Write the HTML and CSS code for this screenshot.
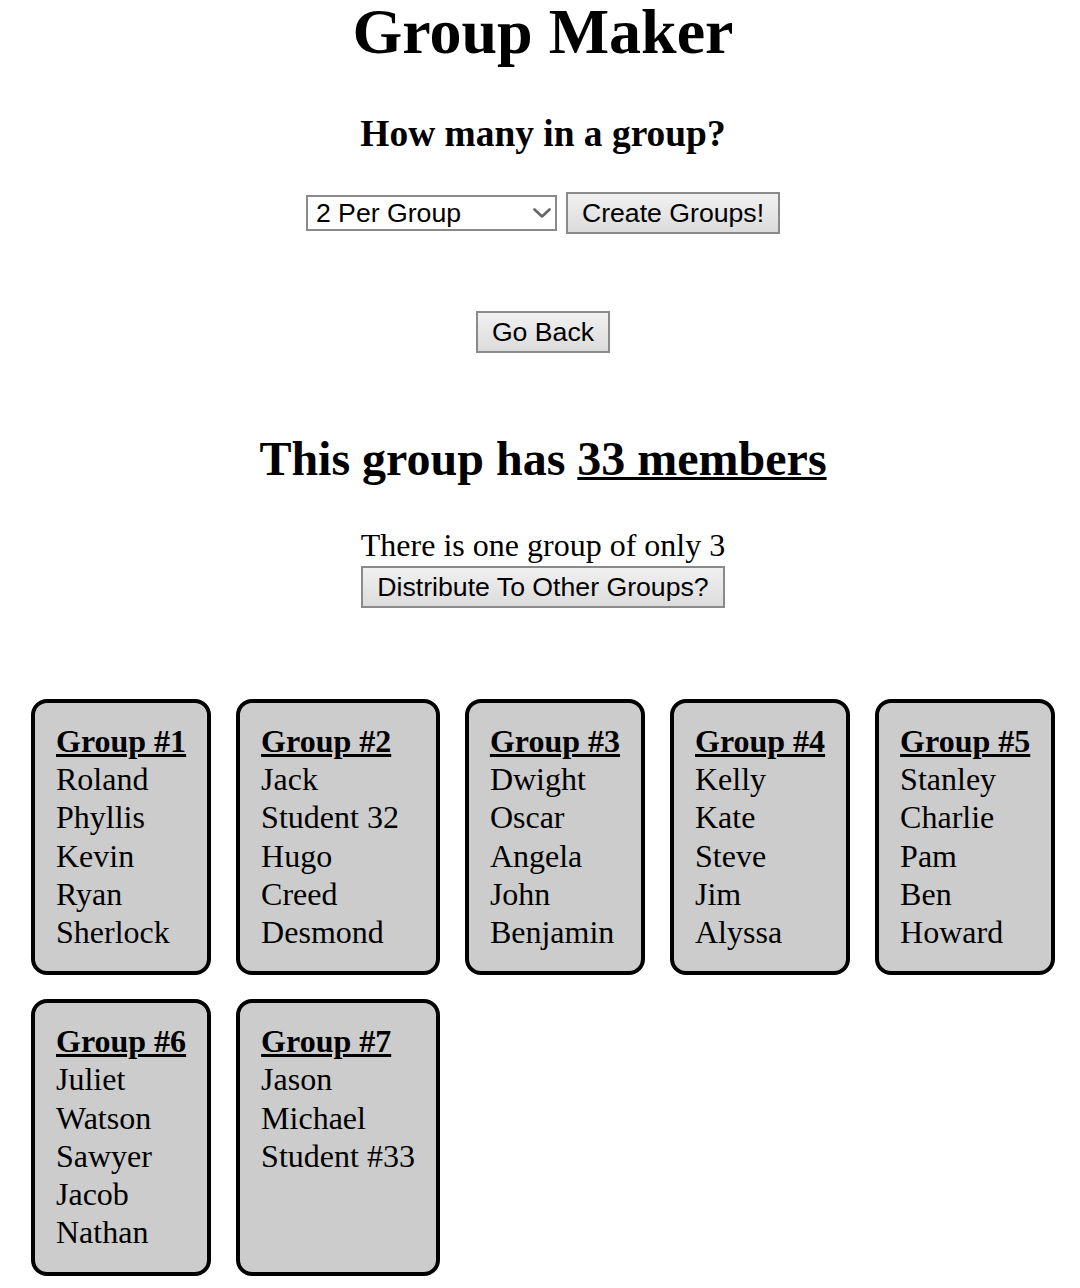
FILE: index.html
```html
<!DOCTYPE html>
<html lang="en">
<head>
<meta charset="utf-8">
<title>Group Maker</title>
<link rel="stylesheet" href="styles.css">
</head>
<body>
<main class="page">
  <h1 class="title">Group Maker</h1>
  <h3 class="question">How many in a group?</h3>
  <div class="controls">
    <div class="select-wrap">
      <select class="size-select">
        <option>2 Per Group</option>
        <option>3 Per Group</option>
        <option>4 Per Group</option>
      </select>
      <svg class="chevron" width="18" height="10" viewBox="0 0 18 10" aria-hidden="true"><polyline points="1.5,1.5 9,8.5 16.5,1.5" fill="none" stroke="#666" stroke-width="2.6" stroke-linecap="round" stroke-linejoin="round"/></svg>
    </div>
    <button class="btn">Create Groups!</button>
  </div>
  <div class="back-row"><button class="btn">Go Back</button></div>
  <h2 class="count">This group has <u>33 members</u></h2>
  <p class="leftover">There is one group of only 3</p>
  <div class="dist-row"><button class="btn">Distribute To Other Groups?</button></div>
</main>
<section class="groups">
  <div class="card"><div class="card-title">Group #1</div><div class="name">Roland</div><div class="name">Phyllis</div><div class="name">Kevin</div><div class="name">Ryan</div><div class="name">Sherlock</div></div>
  <div class="card"><div class="card-title">Group #2</div><div class="name">Jack</div><div class="name">Student 32</div><div class="name">Hugo</div><div class="name">Creed</div><div class="name">Desmond</div></div>
  <div class="card"><div class="card-title">Group #3</div><div class="name">Dwight</div><div class="name">Oscar</div><div class="name">Angela</div><div class="name">John</div><div class="name">Benjamin</div></div>
  <div class="card"><div class="card-title">Group #4</div><div class="name">Kelly</div><div class="name">Kate</div><div class="name">Steve</div><div class="name">Jim</div><div class="name">Alyssa</div></div>
  <div class="card"><div class="card-title">Group #5</div><div class="name">Stanley</div><div class="name">Charlie</div><div class="name">Pam</div><div class="name">Ben</div><div class="name">Howard</div></div>
  <div class="card"><div class="card-title">Group #6</div><div class="name">Juliet</div><div class="name">Watson</div><div class="name">Sawyer</div><div class="name">Jacob</div><div class="name">Nathan</div></div>
  <div class="card"><div class="card-title">Group #7</div><div class="name">Jason</div><div class="name">Michael</div><div class="name">Student #33</div></div>
</section>
</body>
</html>
```
FILE: styles.css
```css
html, body {
  margin: 0;
  padding: 0;
  background: #ffffff;
  color: #000000;
  font-family: "Liberation Serif", "Times New Roman", serif;
}

.page {
  padding-left: 6px;
  text-align: center;
}

.title {
  margin: 0;
  font-size: 64px;
  line-height: 64px;
  font-weight: bold;
}

.question {
  margin: 48px 0 36px;
  font-size: 37.44px;
  line-height: 43px;
  font-weight: bold;
}

.controls {
  display: flex;
  justify-content: center;
  align-items: center;
  gap: 9px;
  height: 43px;
}

.select-wrap {
  position: relative;
  display: flex;
}

.size-select {
  appearance: none;
  -webkit-appearance: none;
  box-sizing: border-box;
  width: 251px;
  height: 36px;
  margin: 0;
  padding: 0 30px 0 8px;
  border: 2px solid #8a8a8a;
  border-radius: 0;
  background: #ffffff;
  color: #000000;
  font-family: "Liberation Sans", Arial, sans-serif;
  font-size: 26.67px;
  line-height: 32px;
}

.chevron {
  position: absolute;
  right: 6px;
  top: 13px;
  pointer-events: none;
}

.btn {
  box-sizing: border-box;
  margin: 0;
  padding: 4px 14px;
  border: 2px solid #8a8a8a;
  border-radius: 0;
  background: linear-gradient(#f0f0f0, #dcdcdc);
  color: #000000;
  font-family: "Liberation Sans", Arial, sans-serif;
  font-size: 26.67px;
  line-height: 30px;
}

.back-row {
  margin-top: 77px;
  display: flex;
  justify-content: center;
}

.count {
  margin: 78px 0 0;
  font-size: 48px;
  line-height: 55px;
  font-weight: bold;
}

.count u {
  text-decoration-thickness: 3px;
}

.leftover {
  margin: 41px 0 0;
  font-size: 32px;
  line-height: 37px;
}

.dist-row {
  margin-top: 2px;
  display: flex;
  justify-content: center;
}

.groups {
  margin: 91px 0 0 31px;
  display: grid;
  grid-template-columns: repeat(5, max-content);
  column-gap: 25px;
  row-gap: 24px;
}

.card {
  padding: 20px 21px;
  border: 4px solid #000000;
  border-radius: 16px;
  background: #cccccc;
  font-size: 32px;
  line-height: 38.25px;
}

.card-title {
  font-weight: bold;
  text-decoration: underline;
  line-height: 37px;
}
```
